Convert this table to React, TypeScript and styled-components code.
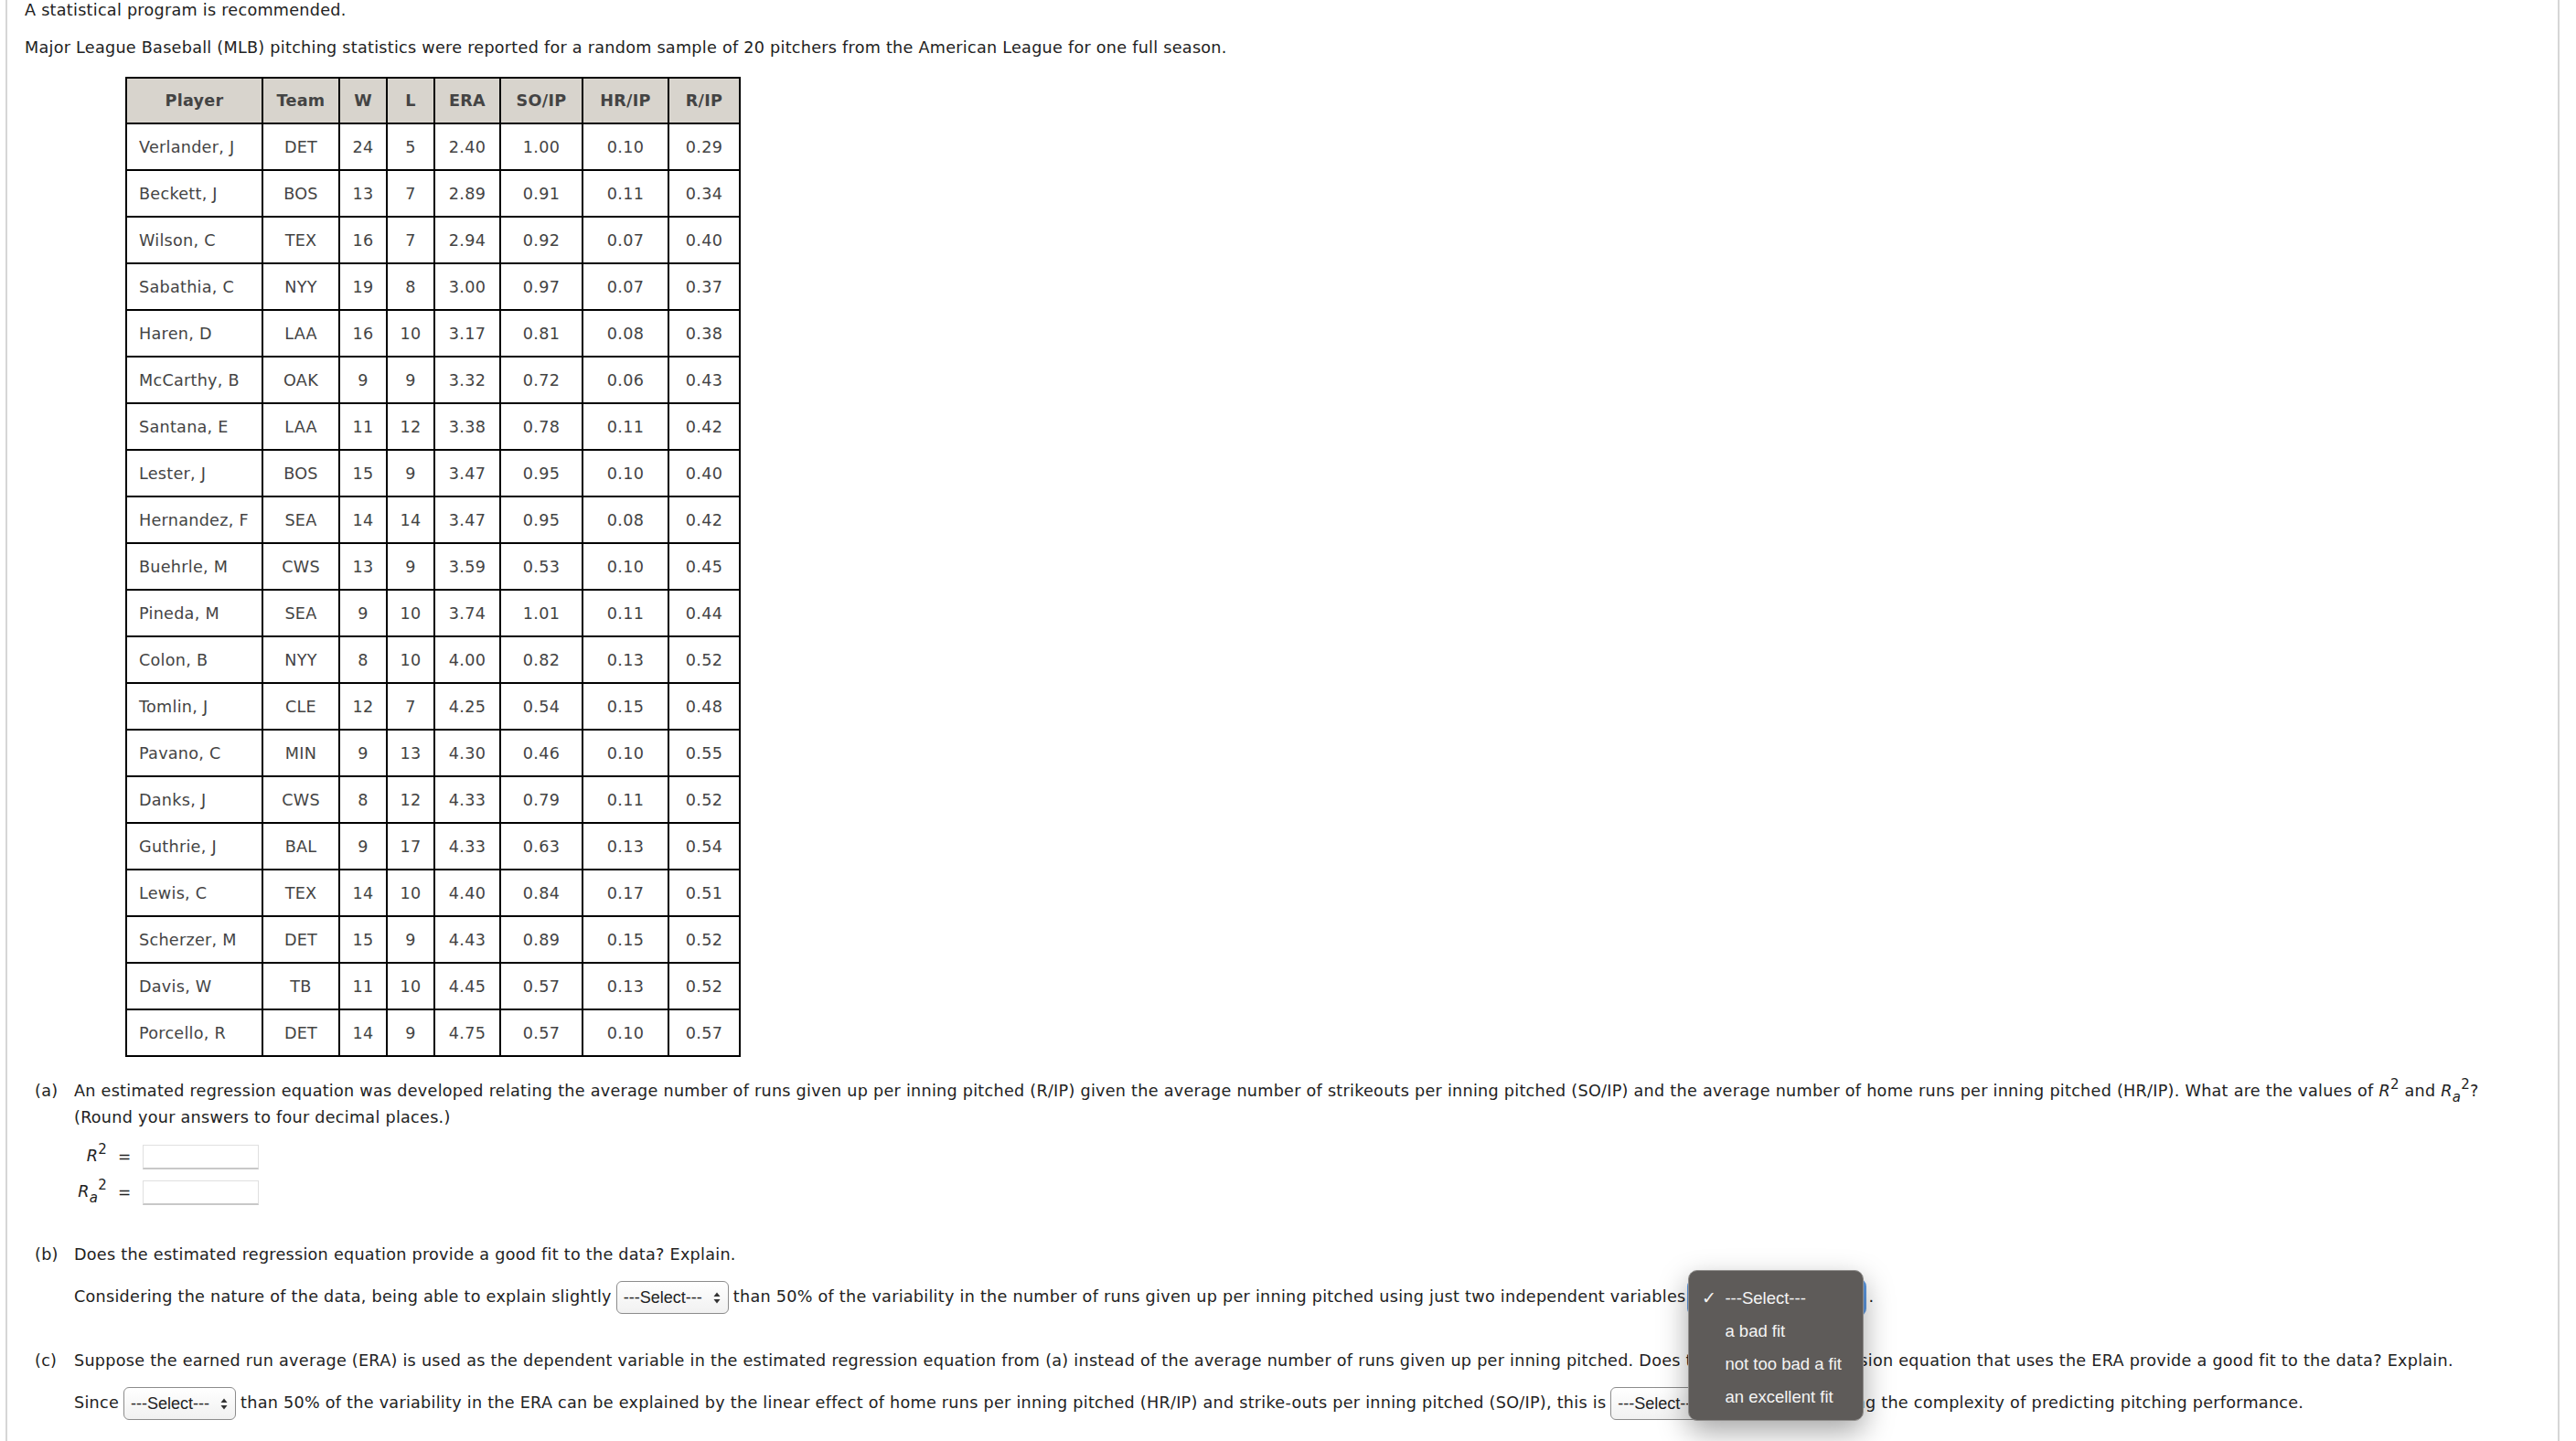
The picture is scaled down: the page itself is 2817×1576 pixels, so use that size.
import React from "react";
import styled, { createGlobalStyle } from "styled-components";

const Global = createGlobalStyle`
  html, body { margin: 0; padding: 0; background: #fff; }
  body { font-family: "DejaVu Sans", Verdana, sans-serif; }
`;

const Page = styled.div`
  position: relative;
  margin-left: 6px;
  width: 2793px;
  box-sizing: border-box;
  min-height: 1576px;
  border-left: 2px solid #d6d6d6;
  border-right: 2px solid #d6d6d6;
  padding: 0 0 0 19px;
  font-size: 17.6px;
  letter-spacing: 0.27px;
  color: #222;
`;

const Intro = styled.p<{ $top: number }>`
  margin: ${(p) => p.$top}px 0 0 0;
  line-height: 22px;
`;

const Table = styled.table`
  margin: 21px 0 0 110px;
  border-collapse: collapse;
  table-layout: fixed;
  border: 2px solid #000;
`;

const Col = styled.col<{ $w: number }>`
  width: ${(p) => p.$w}px;
`;

const Th = styled.th`
  height: 48px;
  padding: 0;
  border: 2px solid #000;
  background: #d8d4cd;
  color: #444;
  font-weight: bold;
  text-align: center;
`;

const Td = styled.td<{ $left?: boolean }>`
  height: 49px;
  padding: 0 0 0 ${(p) => (p.$left ? "13px" : "0")};
  border: 2px solid #000;
  color: #444;
  text-align: ${(p) => (p.$left ? "left" : "center")};
  white-space: nowrap;
`;

const Part = styled.div<{ $top: number }>`
  display: flex;
  margin-top: ${(p) => p.$top}px;
  padding-left: 11px;
  line-height: 29px;
`;

const PartLabel = styled.div`
  width: 43px;
  flex: none;
`;

const PartBody = styled.div`
  flex: 1;
`;

const Line = styled.div<{ $top?: number }>`
  margin-top: ${(p) => p.$top ?? 0}px;
  white-space: nowrap;
`;

const AnswerRow = styled.div<{ $top: number }>`
  display: flex;
  align-items: center;
  height: 28px;
  margin-top: ${(p) => p.$top}px;
`;

const AnswerLabel = styled.span`
  width: 36px;
  text-align: right;
  font-style: italic;
  line-height: 1;
`;

const Sup = styled.sup`
  font-style: normal;
  font-size: 0.85em;
  vertical-align: 0.55em;
  line-height: 0;
`;

const Sub = styled.sub`
  font-size: 0.85em;
  vertical-align: -0.4em;
  line-height: 0;
`;

const Eq = styled.span`
  padding: 0 12px;
  font-size: 17px;
`;

const AnswerInput = styled.div`
  width: 127px;
  height: 27px;
  box-sizing: border-box;
  border: 1px solid #e0e0e0;
  border-bottom: 2px solid #c8c8c8;
  background: #fff;
`;

const SelectWrap = styled.span`
  position: relative;
  display: inline-block;
  vertical-align: middle;
  margin: 0 5px 0 5px;
`;

const SelectBox = styled.span<{ $w: number; $focus?: boolean }>`
  display: flex;
  align-items: center;
  justify-content: space-between;
  box-sizing: border-box;
  width: ${(p) => p.$w}px;
  height: 36px;
  padding: 0 8px 0 7px;
  border: 1px solid #8c8c8c;
  border-radius: 6px;
  background: linear-gradient(#ffffff, #f1f1f1);
  font-family: "Liberation Sans", Arial, sans-serif;
  font-size: 18px;
  letter-spacing: 0;
  line-height: 1;
  color: #222;
  box-shadow: ${(p) => (p.$focus ? "0 0 0 3px #5b97e0" : "none")};
  overflow: hidden;
`;

const Arrows = () => (
  <svg width="8" height="13" viewBox="0 0 8 13">
    <path d="M4 0.5 L7.5 5 L0.5 5 Z" fill="#333" />
    <path d="M4 12.5 L7.5 8 L0.5 8 Z" fill="#333" />
  </svg>
);

const Popup = styled.div`
  position: absolute;
  left: -2px;
  top: -12px;
  width: 192px;
  height: 165px;
  box-sizing: border-box;
  padding-top: 12px;
  border: 1px solid #8f8d8b;
  border-radius: 10px;
  background: #5e5b59;
  box-shadow: 0 12px 32px rgba(0, 0, 0, 0.35);
  z-index: 5;
`;

const PopupItem = styled.div`
  position: relative;
  height: 36px;
  line-height: 36px;
  padding-left: 39px;
  font-family: "Liberation Sans", Arial, sans-serif;
  font-size: 18.5px;
  letter-spacing: 0;
  color: #f4f4f4;
  white-space: nowrap;
`;

const Check = styled.span`
  position: absolute;
  left: 14px;
  top: 0;
`;

type Row = [string, string, number, number, string, string, string, string];

const rows: Row[] = [
  ["Verlander, J", "DET", 24, 5, "2.40", "1.00", "0.10", "0.29"],
  ["Beckett, J", "BOS", 13, 7, "2.89", "0.91", "0.11", "0.34"],
  ["Wilson, C", "TEX", 16, 7, "2.94", "0.92", "0.07", "0.40"],
  ["Sabathia, C", "NYY", 19, 8, "3.00", "0.97", "0.07", "0.37"],
  ["Haren, D", "LAA", 16, 10, "3.17", "0.81", "0.08", "0.38"],
  ["McCarthy, B", "OAK", 9, 9, "3.32", "0.72", "0.06", "0.43"],
  ["Santana, E", "LAA", 11, 12, "3.38", "0.78", "0.11", "0.42"],
  ["Lester, J", "BOS", 15, 9, "3.47", "0.95", "0.10", "0.40"],
  ["Hernandez, F", "SEA", 14, 14, "3.47", "0.95", "0.08", "0.42"],
  ["Buehrle, M", "CWS", 13, 9, "3.59", "0.53", "0.10", "0.45"],
  ["Pineda, M", "SEA", 9, 10, "3.74", "1.01", "0.11", "0.44"],
  ["Colon, B", "NYY", 8, 10, "4.00", "0.82", "0.13", "0.52"],
  ["Tomlin, J", "CLE", 12, 7, "4.25", "0.54", "0.15", "0.48"],
  ["Pavano, C", "MIN", 9, 13, "4.30", "0.46", "0.10", "0.55"],
  ["Danks, J", "CWS", 8, 12, "4.33", "0.79", "0.11", "0.52"],
  ["Guthrie, J", "BAL", 9, 17, "4.33", "0.63", "0.13", "0.54"],
  ["Lewis, C", "TEX", 14, 10, "4.40", "0.84", "0.17", "0.51"],
  ["Scherzer, M", "DET", 15, 9, "4.43", "0.89", "0.15", "0.52"],
  ["Davis, W", "TB", 11, 10, "4.45", "0.57", "0.13", "0.52"],
  ["Porcello, R", "DET", 14, 9, "4.75", "0.57", "0.10", "0.57"],
];

const headers = ["Player", "Team", "W", "L", "ERA", "SO/IP", "HR/IP", "R/IP"];
const widths = [149, 84, 52, 52, 72, 90, 94, 78];

const Select = ({ w, focus, children }: { w: number; focus?: boolean; children?: React.ReactNode }) => (
  <SelectWrap>
    <SelectBox $w={w} $focus={focus}>
      <span>---Select---</span>
      <Arrows />
    </SelectBox>
    {children}
  </SelectWrap>
);

export default function App() {
  return (
    <>
      <Global />
      <Page>
        <Intro $top={0}>A statistical program is recommended.</Intro>
        <Intro $top={19}>
          Major League Baseball (MLB) pitching statistics were reported for a random sample of 20 pitchers from the
          American League for one full season.
        </Intro>
        <Table>
          <colgroup>
            {widths.map((w, i) => (
              <Col key={i} $w={w} />
            ))}
          </colgroup>
          <thead>
            <tr>
              {headers.map((h) => (
                <Th key={h}>{h}</Th>
              ))}
            </tr>
          </thead>
          <tbody>
            {rows.map((r) => (
              <tr key={r[0]}>
                {r.map((c, i) => (
                  <Td key={i} $left={i === 0}>
                    {c}
                  </Td>
                ))}
              </tr>
            ))}
          </tbody>
        </Table>

        <Part $top={23}>
          <PartLabel>(a)</PartLabel>
          <PartBody>
            <Line>
              An estimated regression equation was developed relating the average number of runs given up per inning
              pitched (R/IP) given the average number of strikeouts per inning pitched (SO/IP) and the average number of
              home runs per inning pitched (HR/IP). What are the values of <i>R</i>
              <Sup>2</Sup> and <i>R</i>
              <Sub>
                <i>a</i>
              </Sub>
              <Sup>2</Sup>?
            </Line>
            <Line>(Round your answers to four decimal places.)</Line>
            <AnswerRow $top={14}>
              <AnswerLabel>
                R<Sup>2</Sup>
              </AnswerLabel>
              <Eq>=</Eq>
              <AnswerInput />
            </AnswerRow>
            <AnswerRow $top={11}>
              <AnswerLabel>
                R
                <Sub>a</Sub>
                <Sup>2</Sup>
              </AnswerLabel>
              <Eq>=</Eq>
              <AnswerInput />
            </AnswerRow>
          </PartBody>
        </Part>

        <Part $top={40}>
          <PartLabel>(b)</PartLabel>
          <PartBody>
            <Line>Does the estimated regression equation provide a good fit to the data? Explain.</Line>
            <Line $top={14}>
              Considering the nature of the data, being able to explain slightly
              <Select w={123} />
              than 50% of the variability in the number of runs given up per inning pitched using just two independent
              variables
              <Select w={190} focus>
                <Popup>
                  <PopupItem>
                    <Check>✓</Check>---Select---
                  </PopupItem>
                  <PopupItem>a bad fit</PopupItem>
                  <PopupItem>not too bad a fit</PopupItem>
                  <PopupItem>an excellent fit</PopupItem>
                </Popup>
              </Select>
              .
            </Line>
          </PartBody>
        </Part>

        <Part $top={37}>
          <PartLabel>(c)</PartLabel>
          <PartBody>
            <Line>
              Suppose the earned run average (ERA) is used as the dependent variable in the estimated regression equation
              from (a) instead of the average number of runs given up per inning pitched. Does the estimated regression
              equation that uses the ERA provide a good fit to the data? Explain.
            </Line>
            <Line $top={14}>
              Since
              <Select w={123} />
              than 50% of the variability in the ERA can be explained by the linear effect of home runs per inning pitched
              (HR/IP) and strike-outs per inning pitched (SO/IP), this is
              <Select w={180} />
              considering the complexity of predicting pitching performance.
            </Line>
          </PartBody>
        </Part>
      </Page>
    </>
  );
}
